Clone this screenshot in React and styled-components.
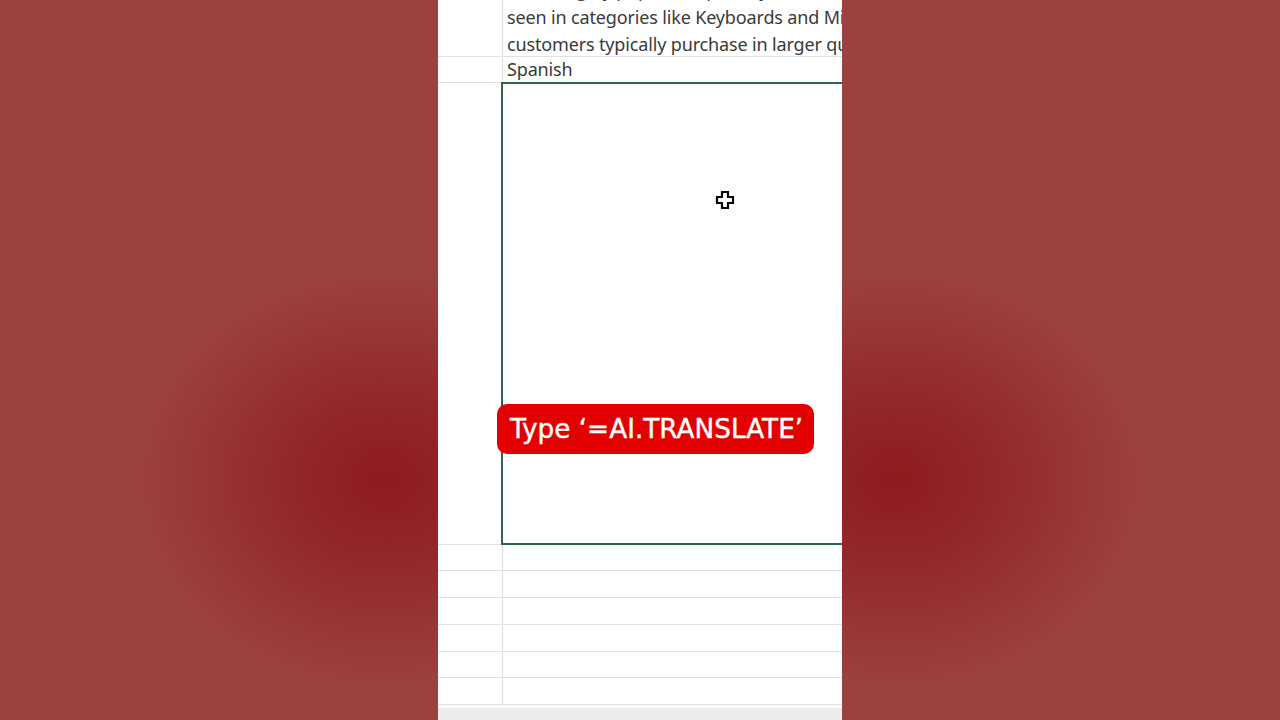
import React from "react";
import styled, { createGlobalStyle } from "styled-components";

const Global = createGlobalStyle`
  html, body {
    margin: 0;
    height: 100%;
  }
  body {
    background-color: #9b4240;
    background-image:
      radial-gradient(ellipse 250px 210px at 385px 480px, rgba(143, 26, 29, 1) 0%, rgba(143, 26, 29, 0.65) 40%, rgba(143, 26, 29, 0) 100%),
      radial-gradient(ellipse 250px 210px at 895px 480px, rgba(143, 26, 29, 1) 0%, rgba(143, 26, 29, 0.65) 40%, rgba(143, 26, 29, 0) 100%);
    font-family: "Noto Sans", "Open Sans", sans-serif;
  }
  #root {
    height: 100%;
  }
`;

const Stage = styled.main`
  height: 720px;
  display: flex;
  justify-content: center;
`;

const Sheet = styled.section`
  position: relative;
  width: 404px;
  height: 720px;
  background: #ffffff;
  overflow: hidden;
  display: flex;
  flex-direction: column;
`;

const Row = styled.div`
  display: flex;
  height: ${(p) => p.h}px;
  flex-shrink: 0;
  border-bottom: 1px solid #e1e1e1;
  box-sizing: border-box;
`;

const Header = styled.div`
  width: 65px;
  flex-shrink: 0;
  border-right: 1px solid #dcdcdc;
  box-sizing: border-box;
`;

const Cell = styled.div`
  flex: 1;
  min-width: 0;
  display: flex;
  flex-direction: column;
  justify-content: ${(p) => (p.bottom ? "flex-end" : "center")};
  padding-left: 4px;
  overflow: hidden;
  white-space: nowrap;
  color: #3a3a3a;
  font-size: 18px;
  letter-spacing: -0.15px;
  line-height: 27px;
`;

const Line = styled.span`
  display: block;
  margin-bottom: ${(p) => p.mb || 0}px;
`;

const Selected = styled.div`
  flex: 1;
  margin: -1px 0 -1px -2px;
  border: 2px solid #2c6844;
  border-right: none;
  background: #ffffff;
`;

const Footer = styled.div`
  flex: 1;
  background: #ececec;
  border-top: 3px solid #ffffff;
`;

const Label = styled.div`
  position: absolute;
  left: 59px;
  top: 404px;
  width: 317px;
  height: 50px;
  box-sizing: border-box;
  border-radius: 10px;
  background: #e30000;
  color: #ffffff;
  font-family: "DejaVu Sans", Verdana, sans-serif;
  font-size: 26.3px;
  display: flex;
  align-items: center;
  padding-left: 13px;
  white-space: nowrap;
  -webkit-text-stroke: 0.4px #ffffff;
`;

const Cursor = styled.svg`
  position: absolute;
  left: 276px;
  top: 189px;
  width: 22px;
  height: 22px;
`;

const App = () => (
  <>
    <Global />
    <Stage>
      <Sheet>
        <Row h={57}>
          <Header />
          <Cell bottom>
            <Line>and is highly popular, especially</Line>
            <Line>seen in categories like Keyboards and Mice, where</Line>
            <Line mb={-2}>customers typically purchase in larger quantities.</Line>
          </Cell>
        </Row>
        <Row h={26}>
          <Header />
          <Cell>Spanish</Cell>
        </Row>
        <Row h={462}>
          <Header />
          <Selected />
        </Row>
        {[26, 27, 27, 27, 26, 27].map((h, i) => (
          <Row key={i} h={h}>
            <Header />
            <Cell />
          </Row>
        ))}
        <Footer />
        <Cursor viewBox="0 0 22 22">
          <path d="M9 4h6v5h5v6h-5v5H9v-5H4V9h5z" fill="rgba(0,0,0,0.18)" />
          <path
            d="M8 3h6v5h5v6h-5v5H8v-5H3V8h5z"
            fill="#ffffff"
            stroke="#000000"
            strokeWidth="2.2"
            strokeLinejoin="miter"
          />
        </Cursor>
        <Label>Type ‘=AI.TRANSLATE’</Label>
      </Sheet>
    </Stage>
  </>
);

export default App;
